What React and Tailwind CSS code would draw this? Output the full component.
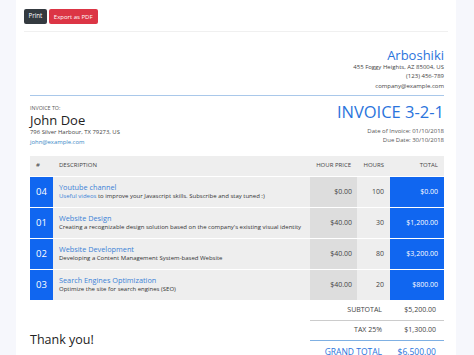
export default function App() {
  const items = [
    { no: "04", title: "Youtube channel", link: "Useful videos", desc: " to improve your Javascript skills. Subscribe and stay tuned :)", price: "$0.00", hours: "100", total: "$0.00" },
    { no: "01", title: "Website Design", desc: "Creating a recognizable design solution based on the company's existing visual identity", price: "$40.00", hours: "30", total: "$1,200.00" },
    { no: "02", title: "Website Development", desc: "Developing a Content Management System-based Website", price: "$40.00", hours: "80", total: "$3,200.00" },
    { no: "03", title: "Search Engines Optimization", desc: "Optimize the site for search engines (SEO)", price: "$40.00", hours: "20", total: "$800.00" },
  ];
  return (
    <div className="min-h-screen bg-[#f6f7fc] pl-4 pr-[18px] font-['Open_Sans',sans-serif] text-[#555]">
      <div className="h-[355px] overflow-hidden bg-white px-2">
        <div className="flex gap-[2px] border-b border-[#f0f0f0] pt-[9px] pb-[7px]">
          <button className="h-[15px] rounded-[2px] bg-[#343a40] px-[4.5px] text-[6.2px] leading-none text-white">Print</button>
          <button className="h-[15px] rounded-[2px] bg-[#dc3545] px-[5px] text-[6px] leading-none text-white">Export as PDF</button>
        </div>
        <div className="pl-[6px] pr-[4px]">
          <header className="border-b border-[#a9c8ea] pt-[16px] pb-[4px] text-right">
            <div className="text-[13px] font-medium leading-[15px] text-[#2a74dc]">Arboshiki</div>
            <div className="text-[6px] leading-[9.3px] text-[#444]">455 Foggy Heights, AZ 85004, US</div>
            <div className="text-[6px] leading-[9.3px] text-[#444]">(123) 456-789</div>
            <div className="text-[6px] leading-[9.3px] text-[#444]">company@example.com</div>
          </header>
          <div className="flex items-start justify-between">
            <div className="pt-[8.5px]">
              <div className="text-[5.3px] leading-[9px] text-[#555]">INVOICE TO:</div>
              <div className="text-[13px] font-medium leading-[15px] text-[#222]">John Doe</div>
              <div className="text-[5.9px] leading-[9.3px] text-[#444]">796 Silver Harbour, TX 79273, US</div>
              <div className="text-[5.9px] leading-[9.3px] text-[#3989c6]">john@example.com</div>
            </div>
            <div className="pt-[6.5px] text-right">
              <div className="text-[16.5px] font-medium leading-[20px] text-[#2a74dc]">INVOICE 3-2-1</div>
              <div className="mt-[5px] text-[6px] leading-[9px] text-[#555]">Date of Invoice: 01/10/2018</div>
              <div className="text-[6px] leading-[9px] text-[#555]">Due Date: 30/10/2018</div>
            </div>
          </div>
          <div className="mt-[9px]">
            <div className="grid h-[21px] grid-cols-[23px_257px_47px_33px_54px] items-center border-b border-white bg-[#eee] text-[6px] uppercase text-[#444]">
              <div className="pl-[6px]">#</div>
              <div className="pl-[6px]">Description</div>
              <div className="pr-[6px] text-right">Hour Price</div>
              <div className="pr-[6px] text-right">Hours</div>
              <div className="pr-[6px] text-right">Total</div>
            </div>
            {items.map((it) => (
              <div key={it.no} className="grid h-[31px] grid-cols-[23px_257px_47px_33px_54px] border-b border-white">
                <div className="flex items-center justify-center bg-[#1066f0] text-[9.5px] font-medium text-white">{it.no}</div>
                <div className="bg-[#eee] pl-[6px] pt-[5px]">
                  <div className="text-[7.3px] leading-[10px] text-[#3b82d6]">{it.title}</div>
                  <div className="whitespace-nowrap text-[6px] leading-[9px] text-[#333]">
                    {it.link && <span className="text-[#3b82d6]">{it.link}</span>}
                    {it.desc}
                  </div>
                </div>
                <div className="flex items-center justify-end bg-[#ddd] pr-[5px] text-[7px] text-[#444]">{it.price}</div>
                <div className="flex items-center justify-end bg-[#eee] pr-[6px] text-[7px] text-[#444]">{it.hours}</div>
                <div className="flex items-center justify-end bg-[#1066f0] pr-[6px] text-[7px] text-white">{it.total}</div>
              </div>
            ))}
            <div className="grid grid-cols-[280px_80px_54px]">
              <div className="h-[19px]"></div>
              <div className="flex h-[19px] items-center justify-end pr-[8px] text-[7px] text-[#444]">SUBTOTAL</div>
              <div className="flex h-[19px] items-center justify-end pr-[8px] text-[7px] text-[#444]">$5,200.00</div>
              <div className="row-span-2 pt-[12px] text-[12.5px] leading-[15px] text-[#222]">Thank you!</div>
              <div className="flex h-[20px] items-center justify-end border-t border-[#ccc] pr-[8px] text-[7px] text-[#444]">TAX 25%</div>
              <div className="flex h-[20px] items-center justify-end border-t border-[#ccc] pr-[8px] text-[7px] text-[#444]">$1,300.00</div>
              <div className="flex h-[23px] items-center justify-end border-t border-[#7fb0e3] pr-[8px] text-[8.5px] text-[#2a74dc]">GRAND TOTAL</div>
              <div className="flex h-[23px] items-center justify-end border-t border-[#7fb0e3] pr-[8px] text-[8.5px] text-[#2a74dc]">$6,500.00</div>
            </div>
          </div>
        </div>
      </div>
    </div>
  );
}
